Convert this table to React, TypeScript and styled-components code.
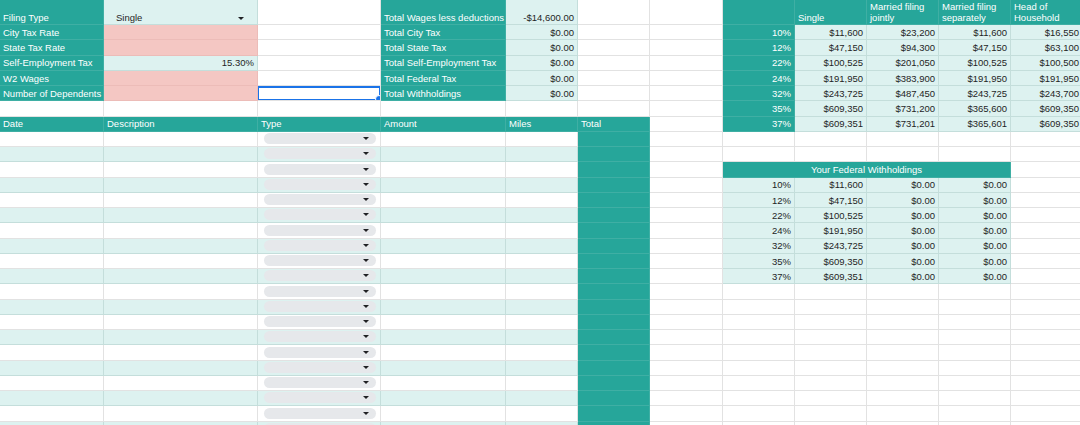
import React from "react";
import styled, { createGlobalStyle, css } from "styled-components";

const GlobalStyle = createGlobalStyle`
  html, body { margin: 0; padding: 0; background: #ffffff; overflow: hidden; }
  body { font-family: "Liberation Sans", Arial, sans-serif; }
`;

type Variant = "white" | "teal" | "light" | "pink";
type Align = "left" | "right" | "center";

const TEAL = "#26a69a";
const LIGHT = "#ddf2f0";
const PINK = "#f4c7c3";

const COLS = [104, 154, 123, 125, 72, 72, 73, 72, 72, 72, 72, 72];
const ROWS = 28;

const bg: Record<Variant, string> = { white: "#ffffff", teal: TEAL, light: LIGHT, pink: PINK };
const line: Record<Variant, string> = {
  white: "#e2e2e2",
  teal: "#3fafa4",
  light: "#c4dedb",
  pink: "#ecbcb8",
};

const Sheet = styled.div`
  display: grid;
  grid-template-columns: ${COLS.map((c) => `${c}px`).join(" ")};
  grid-template-rows: 25px repeat(${ROWS - 1}, 15.25px);
  width: ${COLS.reduce((a, b) => a + b, 0)}px;
  font-size: 9.5px;
  color: #1f1f1f;
`;

const Cell = styled.div<{ $v: Variant; $align: Align; $span?: number; $wrap?: boolean }>`
  position: relative;
  box-sizing: border-box;
  display: flex;
  align-items: flex-end;
  justify-content: ${(p) => (p.$align === "right" ? "flex-end" : p.$align === "center" ? "center" : "flex-start")};
  text-align: ${(p) => p.$align};
  padding: 0 3px 1px 3px;
  background: ${(p) => bg[p.$v]};
  color: ${(p) => (p.$v === "teal" ? "#ffffff" : "#1f1f1f")};
  border-right: 1px solid ${(p) => line[p.$v]};
  border-bottom: 1px solid ${(p) => line[p.$v]};
  line-height: 10.5px;
  overflow: hidden;
  white-space: ${(p) => (p.$wrap ? "normal" : "nowrap")};
  ${(p) => p.$span && css`grid-column: span ${p.$span};`}
`;

const Chip = styled.div`
  flex: 1;
  display: flex;
  align-items: center;
  justify-content: flex-end;
  height: 11px;
  margin: 0 1px 1px 3px;
  padding-right: 7px;
  border-radius: 6px;
  background: #e6e8eb;
`;

const Arrow = styled.span`
  display: block;
  width: 0;
  height: 0;
  border-left: 3px solid transparent;
  border-right: 3px solid transparent;
  border-top: 3.5px solid #202124;
`;

const FilingSelect = styled.div`
  flex: 1;
  display: flex;
  align-items: flex-end;
  justify-content: space-between;
  padding: 0 10px 0 9px;
`;

const FilingArrow = styled(Arrow)`
  margin-bottom: 3px;
`;

const Selection = styled.div`
  position: absolute;
  inset: 0 -1px -1px -1px;
  border: 2px solid #1a73e8;
  box-sizing: border-box;
`;

const Handle = styled.span`
  position: absolute;
  right: -4px;
  bottom: -4px;
  width: 6px;
  height: 6px;
  border-radius: 50%;
  background: #1a73e8;
  border: 1px solid #ffffff;
`;

const leftLabels = [
  "Filing Type",
  "City Tax Rate",
  "State Tax Rate",
  "Self-Employment Tax",
  "W2 Wages",
  "Number of Dependents",
];
const midLabels = [
  "Total Wages less deductions",
  "Total City Tax",
  "Total State Tax",
  "Total Self-Employment Tax",
  "Total Federal Tax",
  "Total Withholdings",
];
const midValues = ["-$14,600.00", "$0.00", "$0.00", "$0.00", "$0.00", "$0.00"];
const brackets = ["10%", "12%", "22%", "24%", "32%", "35%", "37%"];
const bracketHeaders = ["Single", "Married filing jointly", "Married filing separately", "Head of Household"];
const bracketRows = [
  ["$11,600", "$23,200", "$11,600", "$16,550"],
  ["$47,150", "$94,300", "$47,150", "$63,100"],
  ["$100,525", "$201,050", "$100,525", "$100,500"],
  ["$191,950", "$383,900", "$191,950", "$191,950"],
  ["$243,725", "$487,450", "$243,725", "$243,700"],
  ["$609,350", "$731,200", "$365,600", "$609,350"],
  ["$609,351", "$731,201", "$365,601", "$609,350"],
];
const tableHeaders = ["Date", "Description", "Type", "Amount", "Miles", "Total"];

type Spec = {
  v: Variant;
  align?: Align;
  text?: string;
  span?: number;
  wrap?: boolean;
  kind?: "chip" | "filing" | "selected";
  skip?: boolean;
};

function spec(r: number, c: number): Spec {
  // Inputs block
  if (r <= 5 && c === 0) return { v: "teal", text: leftLabels[r] };
  if (r <= 5 && c === 1) {
    if (r === 0) return { v: "light", kind: "filing" };
    if (r === 3) return { v: "light", align: "right", text: "15.30%" };
    return { v: "pink" };
  }
  if (r === 5 && c === 2) return { v: "white", kind: "selected" };
  // Totals block
  if (r <= 5 && c === 3) return { v: "teal", text: midLabels[r] };
  if (r <= 5 && c === 4) return { v: "light", align: "right", text: midValues[r] };
  // Brackets table
  if (r <= 7 && c === 7) return { v: "teal", align: "right", text: r === 0 ? "" : brackets[r - 1] };
  if (r === 0 && c >= 8) return { v: "teal", text: bracketHeaders[c - 8], wrap: true };
  if (r >= 1 && r <= 7 && c >= 8) return { v: "light", align: "right", text: bracketRows[r - 1][c - 8] };
  // Federal withholdings
  if (r === 10 && c === 7) return { v: "teal", align: "center", text: "Your Federal Withholdings", span: 4 };
  if (r === 10 && c >= 8 && c <= 10) return { v: "teal", skip: true };
  if (r >= 11 && r <= 17 && c >= 7 && c <= 10) {
    const i = r - 11;
    const vals = [brackets[i], bracketRows[i][0], "$0.00", "$0.00"];
    return { v: "light", align: "right", text: vals[c - 7] };
  }
  // Transactions table
  if (r === 7 && c <= 5) return { v: "teal", text: tableHeaders[c] };
  if (r >= 8 && c === 5) return { v: "teal" };
  if (r >= 8 && c <= 4) {
    const v: Variant = (r - 8) % 2 === 0 ? "white" : "light";
    return { v, kind: c === 2 ? "chip" : undefined };
  }
  return { v: "white" };
}

export default function App() {
  const cells: React.ReactNode[] = [];
  for (let r = 0; r < ROWS; r++) {
    for (let c = 0; c < COLS.length; c++) {
      const s = spec(r, c);
      if (s.skip) continue;
      cells.push(
        <Cell key={`${r}-${c}`} $v={s.v} $align={s.align ?? "left"} $span={s.span} $wrap={s.wrap}>
          {s.kind === "filing" && (
            <FilingSelect>
              <span>Single</span>
              <FilingArrow />
            </FilingSelect>
          )}
          {s.kind === "chip" && (
            <Chip>
              <Arrow />
            </Chip>
          )}
          {s.kind === "selected" && (
            <Selection>
              <Handle />
            </Selection>
          )}
          {s.text}
        </Cell>
      );
    }
  }
  return (
    <>
      <GlobalStyle />
      <Sheet>{cells}</Sheet>
    </>
  );
}
